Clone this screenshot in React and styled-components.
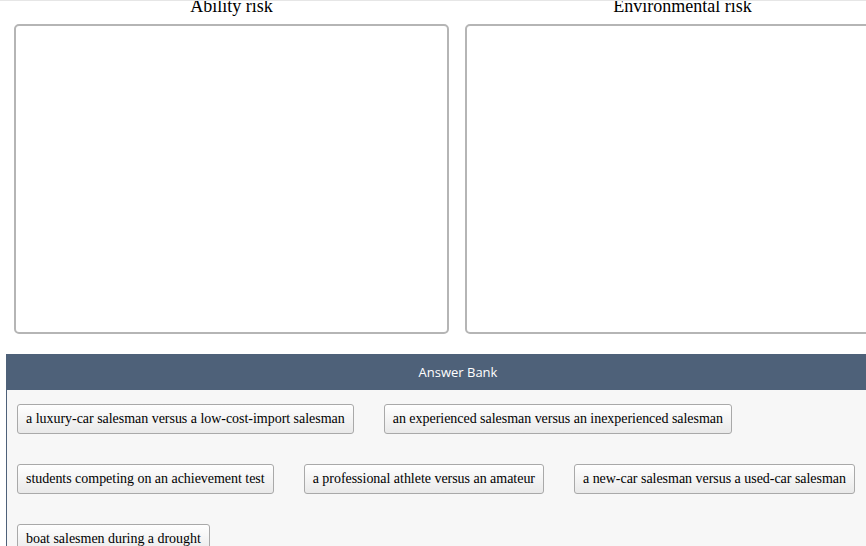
import React from "react";
import styled, {createGlobalStyle} from "styled-components";

const GlobalStyle = createGlobalStyle`
	html, body{
		margin:0;
		padding:0;
		background:#fff;
		overflow:hidden;
	}
`;

const categories = ["Ability risk", "Environmental risk"];

const answers = [
	"a luxury-car salesman versus a low-cost-import salesman",
	"an experienced salesman versus an inexperienced salesman",
	"students competing on an achievement test",
	"a professional athlete versus an amateur",
	"a new-car salesman versus a used-car salesman",
	"boat salesmen during a drought",
];

const App = () => {
	return(
		<>
		<GlobalStyle/>
		<Page>
			<Columns>
				{categories.map((name) => (
					<Column key={name}>
						<Title>{name}</Title>
						<DropZone/>
					</Column>
				))}
			</Columns>
			<Bank>
				<BankHeader>Answer Bank</BankHeader>
				<BankBody>
					{answers.map((text) => (
						<Chip key={text}>{text}</Chip>
					))}
				</BankBody>
			</Bank>
		</Page>
		</>
	);
};

const Page = styled.div`
	width:866px;
	height:546px;
	overflow:hidden;
	border-top:1px solid #e6e6e6;
	box-sizing:border-box;
`;

const Columns = styled.div`
	display:grid;
	grid-template-columns:435px 435px;
	column-gap:16px;
	padding-left:14px;
	margin-top:-5px;
`;

const Column = styled.div`
	display:flex;
	flex-direction:column;
`;

const Title = styled.div`
	font-family:"Liberation Serif", "Times New Roman", serif;
	font-size:18px;
	line-height:20px;
	color:#000;
	text-align:center;
	margin-bottom:8px;
`;

const DropZone = styled.div`
	height:310px;
	box-sizing:border-box;
	border:2px solid #b5b5b5;
	border-radius:5px;
	background:#fff;
`;

const Bank = styled.div`
	margin:20px 0 0 6px;
	width:902px;
	border-left:1px solid #4e6179;
`;

const BankHeader = styled.div`
	height:36px;
	background:#4e6179;
	color:#fff;
	font-family:"Open Sans", "Liberation Sans", sans-serif;
	font-size:13px;
	font-weight:500;
	display:flex;
	align-items:center;
	justify-content:center;
`;

const BankBody = styled.div`
	background:#f7f7f7;
	display:flex;
	flex-wrap:wrap;
	gap:30px 30px;
	padding:14px 10px 40px;
	width:880px;
`;

const Chip = styled.div`
	height:30px;
	box-sizing:border-box;
	padding:0 8px;
	border:1px solid #a9a9a9;
	border-radius:3px;
	background:linear-gradient(to bottom, #ffffff, #e9e9e9);
	font-family:"Liberation Serif", "Times New Roman", serif;
	font-size:14px;
	line-height:28px;
	letter-spacing:-0.03px;
	color:#000;
	white-space:nowrap;
`;

export default App;
